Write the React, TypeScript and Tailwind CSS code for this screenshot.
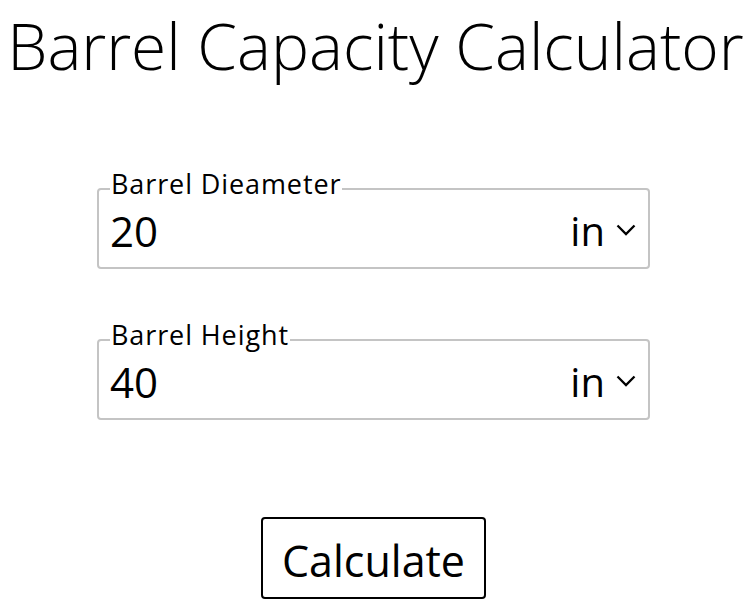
import React from "react";

function Field({ label, value }: { label: string; value: string }) {
  return (
    <fieldset className="w-[553px] border-2 border-[#c4c4c4] rounded-[4px] pl-[11px] pr-[12px] pt-0 pb-[14px] m-0 min-w-0">
      <legend className="px-[1px] pb-[10px] text-[27px] leading-[30px] tracking-[0.9px] text-black">{label}</legend>
      <div className="flex items-center justify-between h-[44px]">
        <span className="text-[42px] leading-[44px] text-black">{value}</span>
        <div className="flex items-center gap-[11px]">
          <span className="text-[40px] leading-[44px] text-black">in</span>
          <svg width="20" height="12" viewBox="0 0 20 12" className="mt-[-2px]">
            <path d="M1.5 1.5 L10 10 L18.5 1.5" fill="none" stroke="#000" strokeWidth="2.3" />
          </svg>
        </div>
      </div>
    </fieldset>
  );
}

export default function App() {
  return (
    <div
      className="w-[751px] h-[609px] bg-white flex flex-col items-center overflow-hidden"
      style={{ fontFamily: '"Open Sans", "Noto Sans", sans-serif' }}
    >
      <h1 className="text-[64px] font-light leading-[80px] mt-[6px] text-black">
        Barrel Capacity Calculator
      </h1>
      <div className="w-full pr-[4px] flex flex-col items-center">
        <div className="mt-[83px] flex flex-col items-center gap-[51px]">
          <Field label="Barrel Dieameter" value="20" />
          <Field label="Barrel Height" value="40" />
        </div>
        <button className="mt-[97px] w-[225px] h-[82px] border-2 border-black rounded-[4px] bg-white text-[43px] leading-[60px] pt-[6px] text-black">
          Calculate
        </button>
      </div>
    </div>
  );
}
